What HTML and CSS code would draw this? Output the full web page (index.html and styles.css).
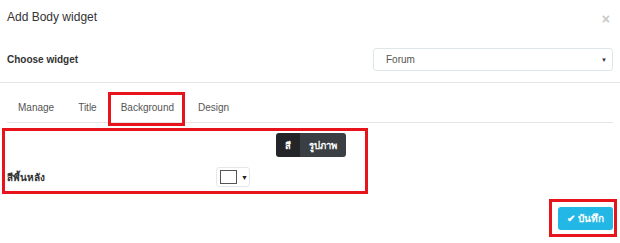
FILE: index.html
```html
<!DOCTYPE html>
<html>
<head>
<meta charset="utf-8">
<link rel="stylesheet" href="styles.css">
</head>
<body>
<div class="modal">
  <div class="modal-header">
    <div class="modal-title">Add Body widget</div>
    <div class="close">×</div>
  </div>
  <div class="choose-row">
    <div class="label">Choose widget</div>
    <div class="select"><span>Forum</span><span class="arrow">▼</span></div>
  </div>
  <div class="divider"></div>
  <div class="tabs">
    <div class="tab">Manage</div>
    <div class="tab">Title</div>
    <div class="tab">Background</div>
    <div class="tab">Design</div>
  </div>
  <div class="tab-content">
    <div class="toggle-row">
      <div class="toggle">
        <div class="toggle-btn active">สี</div>
        <div class="toggle-btn">รูปภาพ</div>
      </div>
    </div>
    <div class="color-row">
      <div class="label">สีพื้นหลัง</div>
      <div class="picker"><span class="swatch"></span><span class="caret">▼</span></div>
    </div>
  </div>
  <div class="footer">
    <div class="save-btn"><span class="check">✔</span> บันทึก</div>
  </div>
</div>
<div class="mark mark-tab"></div>
<div class="mark mark-content"></div>
<div class="mark mark-save"></div>
</body>
</html>
```

FILE: styles.css
```css
html, body {
  margin: 0;
  padding: 0;
  background: #fff;
}
body {
  width: 620px;
  height: 243px;
  overflow: hidden;
  position: relative;
  font-family: "Liberation Sans", Arial, sans-serif;
  color: #333;
}
.modal-header {
  height: 48px;
  box-sizing: border-box;
  padding: 10px 7px 0 7px;
  display: flex;
  justify-content: space-between;
  align-items: flex-start;
}
.modal-title {
  font-size: 12px;
  line-height: 14px;
  color: #333;
}
.close {
  font-size: 14px;
  line-height: 10px;
  color: #c8c8c8;
  font-weight: bold;
  margin-top: 4px;
  margin-right: 3px;
}
.choose-row {
  display: flex;
  align-items: center;
  justify-content: space-between;
  padding: 0 7px;
  height: 23px;
  margin-bottom: 11px;
}
.label {
  font-size: 10px;
  font-weight: bold;
  color: #333;
}
.select {
  width: 240px;
  height: 23px;
  box-sizing: border-box;
  border: 1px solid #dde6e9;
  border-radius: 3px;
  display: flex;
  align-items: center;
  justify-content: space-between;
  padding: 0 5px 0 12px;
  font-size: 10px;
  color: #555;
}
.arrow {
  font-size: 6px;
  color: #333;
}
.divider {
  height: 1px;
  background: #e5e5e5;
}
.tabs {
  display: flex;
  margin: 0 7px;
  padding-left: 0;
  height: 39px;
  border-bottom: 1px solid #e5e5e5;
  align-items: center;
}
.tab {
  font-size: 10px;
  color: #555;
  padding: 0 12px;
  padding-top: 10px;
}
.tab:first-child {
  padding-left: 11px;
}
.tab-content {
  padding: 10px 7px 0 7px;
}
.toggle-row {
  display: flex;
  padding-left: 269px;
}
.toggle {
  display: flex;
  height: 24px;
  border-radius: 3px;
  overflow: hidden;
}
.toggle-btn {
  background: #3a3f44;
  color: #fff;
  font-size: 9.5px;
  font-weight: bold;
  display: flex;
  align-items: center;
  justify-content: center;
  width: 46px;
}
.toggle-btn.active {
  background: #232528;
  width: 24px;
}
.color-row {
  display: flex;
  align-items: center;
  margin-top: 10px;
  height: 20px;
}
.color-row .label {
  width: 209px;
}
.picker {
  width: 34px;
  height: 20px;
  box-sizing: border-box;
  border: 1px solid #e4e8ea;
  border-radius: 3px;
  display: flex;
  align-items: center;
  padding-left: 3px;
}
.swatch {
  width: 17px;
  height: 14px;
  box-sizing: border-box;
  border: 1px solid #555;
  background: #fff;
}
.caret {
  font-size: 7px;
  color: #222;
  margin-left: 4px;
}
.footer {
  display: flex;
  justify-content: flex-end;
  padding: 0 7px;
  margin-top: 20px;
}
.save-btn {
  width: 55px;
  height: 23px;
  background: #23b7e5;
  border-radius: 3px;
  color: #fff;
  font-size: 10px;
  font-weight: bold;
  display: flex;
  align-items: center;
  justify-content: center;
  gap: 3px;
}
.check {
  font-size: 10px;
}
.mark {
  position: absolute;
  border: 3px solid #e8141c;
  box-sizing: border-box;
}
.mark-tab {
  left: 108px;
  top: 92px;
  width: 77px;
  height: 34px;
}
.mark-content {
  left: 2px;
  top: 128px;
  width: 366px;
  height: 66px;
}
.mark-save {
  left: 549px;
  top: 199px;
  width: 68px;
  height: 38px;
}
```
